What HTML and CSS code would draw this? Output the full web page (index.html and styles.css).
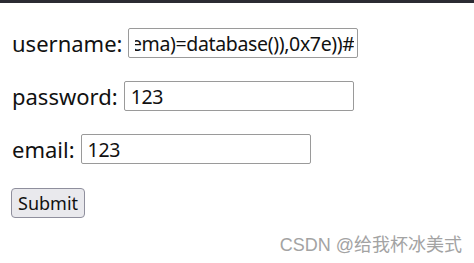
FILE: index.html
```html
<!DOCTYPE html>
<html>
<head>
<meta charset="utf-8">
<link rel="stylesheet" href="styles.css">
</head>
<body>
<div class="topbar"></div>
<form class="form">
  <div class="row"><label class="label" for="u">username:</label><input class="field" id="u" type="text" value="1' and extractvalue(1,concat(0x7e,(select group_concat(table_name) from information_schema.tables where table_schema)=database()),0x7e))#"></div>
  <div class="row"><label class="label" for="p">password:</label><input class="field" id="p" type="text" value="123"></div>
  <div class="row"><label class="label" for="e">email:</label><input class="field" id="e" type="text" value="123"></div>
  <div class="row"><button class="btn" type="button">Submit</button></div>
</form>
<div class="watermark">CSDN @给我杯冰美式</div>
<script src="script.js"></script>
</body>
</html>
```
FILE: styles.css
```css
html, body { margin: 0; padding: 0; background: #fff; }
body { width: 474px; height: 263px; position: relative; overflow: hidden; font-family: "Noto Sans", "Open Sans", sans-serif; color: #111; }
.topbar { height: 3px; background: #2b2b33; }
.form { display: flex; flex-direction: column; gap: 23px; padding: 25px 0 0 12px; }
.row { display: flex; align-items: center; gap: 6px; height: 30px; }
.label { font-size: 22px; line-height: 30px; }
.field { box-sizing: border-box; width: 230px; height: 30px; margin: 0; padding: 0 3px 0 6px; border: 1px solid #9a9a9a; border-radius: 2px; font-family: "Noto Sans", "Open Sans", sans-serif; font-size: 19.5px; letter-spacing: -0.35px; color: #111; background: #fff; outline: none; }
.btn { box-sizing: border-box; height: 30px; padding: 0 6px; margin: 2px 0 0 -1px; border: 1px solid #8f8f9d; border-radius: 4px; background: #e9e9ed; font-family: "Noto Sans", "Open Sans", sans-serif; font-size: 18px; color: #111; }
.watermark { position: absolute; right: 12px; bottom: 7px; font-family: "Liberation Sans", "Noto Sans CJK SC", sans-serif; font-size: 18px; color: #a3a3a3; }
```
FILE: script.js
```js
var u = document.getElementById('u');
u.scrollLeft = u.scrollWidth;
```
